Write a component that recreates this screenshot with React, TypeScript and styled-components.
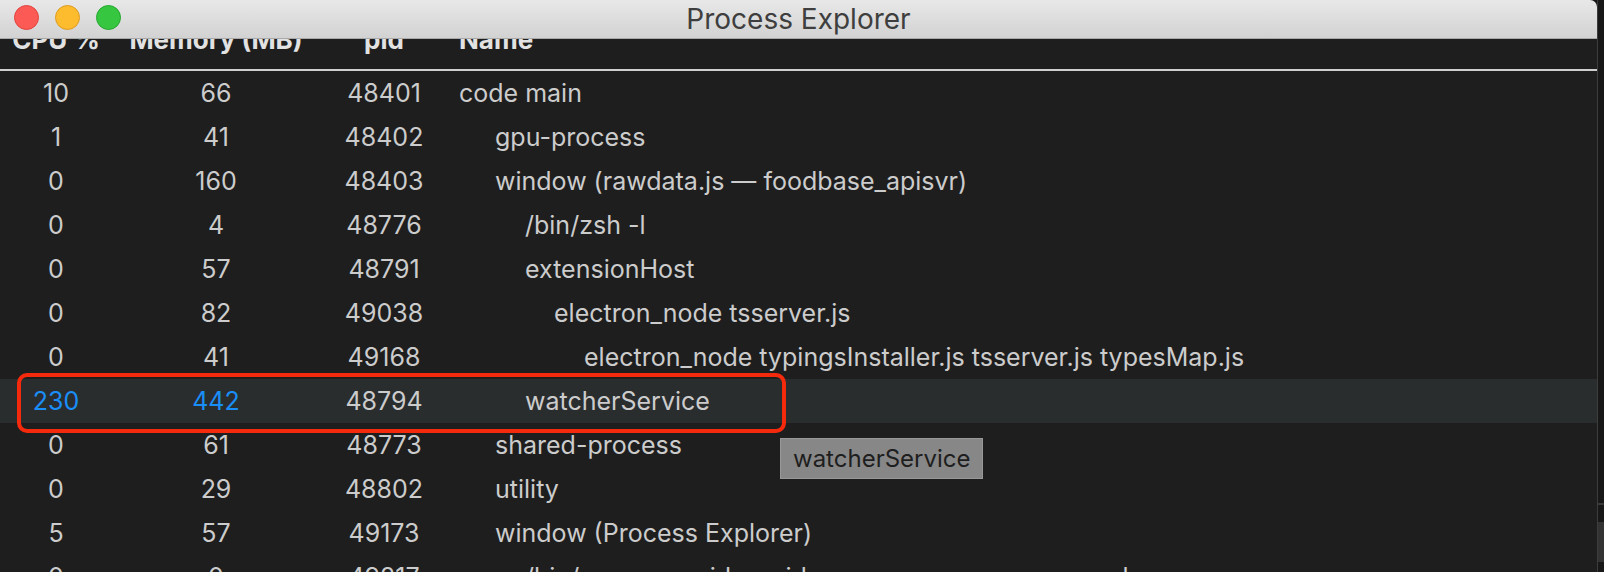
import React from 'react'
import styled, { createGlobalStyle } from 'styled-components'

const GlobalStyle = createGlobalStyle`
  html, body {
    margin: 0;
    padding: 0;
    background: #161616;
    overflow: hidden;
  }
  * { box-sizing: border-box; }
`

const Screen = styled.div`
  display: flex;
  width: 1604px;
  height: 572px;
  font-family: Inter, "Noto Sans", sans-serif;
`

const Window = styled.div`
  flex: 1;
  display: flex;
  flex-direction: column;
  overflow: hidden;
  border-top-right-radius: 7px;
  background: #1e1e1e;
`

const TitleBar = styled.div`
  flex-shrink: 0;
  height: 39px;
  display: flex;
  align-items: center;
  position: relative;
  background: linear-gradient(#e8e8e8, #d2d2d2);
  border-bottom: 1px solid #a9a9a9;
`

const Lights = styled.div`
  display: flex;
  gap: 16px;
  padding-left: 14px;
  position: absolute;
  left: 0;
  top: 5px;
`

const Light = styled.span<{ $fill: string; $edge: string }>`
  width: 25px;
  height: 25px;
  border-radius: 50%;
  background: ${p => p.$fill};
  border: 1px solid ${p => p.$edge};
`

const Title = styled.div`
  flex: 1;
  text-align: center;
  font-size: 28px;
  color: #3e3e3e;
  padding-bottom: 1px;
`

const Content = styled.div`
  flex: 1;
  overflow: hidden;
  position: relative;
`

const Table = styled.div`
  margin-top: -20px;
`

const Row = styled.div<{ $active?: boolean }>`
  display: grid;
  grid-template-columns: 112px 208px 128px 1fr;
  align-items: center;
  position: relative;
  height: 44px;
  font-size: 25px;
  color: #cccccc;
  background: ${p => (p.$active ? '#2a2d2e' : 'transparent')};
  white-space: nowrap;
`

const HeaderRow = styled(Row)`
  height: 52px;
  padding-bottom: 10px;
  font-size: 26px;
  font-weight: 700;
  color: #e2e2e2;
  border-bottom: 2px solid #cfcfcf;
`

const Num = styled.div<{ $hot?: boolean }>`
  text-align: center;
  color: ${p => (p.$hot ? '#1a8ef7' : 'inherit')};
`

const NameCell = styled.div<{ $indent: number }>`
  padding-left: ${p => 11 + p.$indent}px;
`

const Annotation = styled.div`
  position: absolute;
  left: 17px;
  top: -6px;
  width: 769px;
  height: 60px;
  border: 4px solid #f52a0c;
  border-radius: 10px;
  pointer-events: none;
`

const Tooltip = styled.div`
  position: absolute;
  left: 780px;
  top: 59px;
  height: 41px;
  padding: 0 12px;
  display: flex;
  align-items: center;
  background: #878787;
  border: 1px solid #989898;
  color: #1e1e1e;
  font-size: 24px;
  font-weight: 400;
  z-index: 2;
`

const Strip = styled.div`
  width: 7px;
  flex-shrink: 0;
  display: flex;
  flex-direction: column;
  border-left: 1px solid #3c3c3c;
  background: #181818;
  padding-top: 503px;
`

const StripLine = styled.div`
  height: 2px;
  background: #3a3a3a;
  margin-bottom: 17px;
`

const Thumb = styled.div`
  height: 40px;
  background: #333333;
`

const indents = [0, 36, 66, 95, 125]

type Proc = { cpu: string; mem: string; pid: string; name: string; depth: number; hot?: boolean }

const procs: Proc[] = [
  { cpu: '10', mem: '66', pid: '48401', name: 'code main', depth: 0 },
  { cpu: '1', mem: '41', pid: '48402', name: 'gpu-process', depth: 1 },
  { cpu: '0', mem: '160', pid: '48403', name: 'window (rawdata.js \u2014 foodbase_apisvr)', depth: 1 },
  { cpu: '0', mem: '4', pid: '48776', name: '/bin/zsh -l', depth: 2 },
  { cpu: '0', mem: '57', pid: '48791', name: 'extensionHost', depth: 2 },
  { cpu: '0', mem: '82', pid: '49038', name: 'electron_node tsserver.js', depth: 3 },
  { cpu: '0', mem: '41', pid: '49168', name: 'electron_node typingsInstaller.js tsserver.js typesMap.js', depth: 4 },
  { cpu: '230', mem: '442', pid: '48794', name: 'watcherService', depth: 2, hot: true },
  { cpu: '0', mem: '61', pid: '48773', name: 'shared-process', depth: 1 },
  { cpu: '0', mem: '29', pid: '48802', name: 'utility', depth: 1 },
  { cpu: '5', mem: '57', pid: '49173', name: 'window (Process Explorer)', depth: 1 },
  { cpu: '0', mem: '0', pid: '49217', name: '/bin/ps -ax -o pid=,ppid=,pcpu=,pmem=,command=', depth: 2 },
]

const App: React.FC = () => {
  return (
    <Screen>
      <GlobalStyle />
      <Window>
        <TitleBar>
          <Lights>
            <Light $fill="#fc5a55" $edge="#e0443e" />
            <Light $fill="#fdbb2e" $edge="#de9b22" />
            <Light $fill="#36c640" $edge="#25a72f" />
          </Lights>
          <Title>Process Explorer</Title>
        </TitleBar>
        <Content>
          <Table>
            <HeaderRow>
              <Num>CPU %</Num>
              <Num>Memory (MB)</Num>
              <Num>pid</Num>
              <NameCell $indent={0}>Name</NameCell>
            </HeaderRow>
            {procs.map(p => (
              <Row key={p.pid} $active={p.hot}>
                <Num $hot={p.hot}>{p.cpu}</Num>
                <Num $hot={p.hot}>{p.mem}</Num>
                <Num>{p.pid}</Num>
                <NameCell $indent={indents[p.depth]}>{p.name}</NameCell>
                {p.hot && (
                  <>
                    <Annotation />
                    <Tooltip>watcherService</Tooltip>
                  </>
                )}
              </Row>
            ))}
          </Table>
        </Content>
      </Window>
      <Strip>
        <StripLine />
        <Thumb />
      </Strip>
    </Screen>
  )
}

export default App
